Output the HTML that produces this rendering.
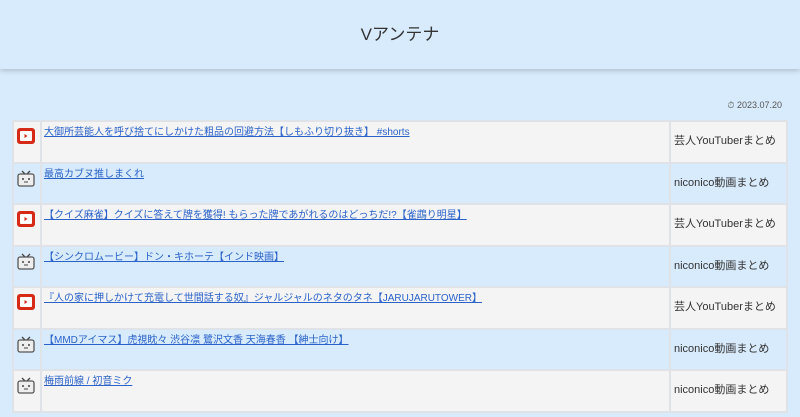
<!DOCTYPE html>
<html><head><meta charset="utf-8">
<style>
body{margin:0;width:800px;height:417px;overflow:hidden;background:#d8ebfc;font-family:"Liberation Sans","Noto Sans CJK JP",sans-serif;}
.hd{height:69px;background:#d7ebfc;box-shadow:0 2px 5px rgba(0,0,0,.18);text-align:center;line-height:70px;font-size:17px;color:#333;position:relative;}
.date{position:absolute;top:100px;right:18px;font-size:9px;color:#555;}
table{position:absolute;top:120px;left:12px;width:776px;border-collapse:separate;border-spacing:2px;background:#dfe3e8;table-layout:fixed;}
td{box-sizing:border-box;height:39.5px;vertical-align:top;padding:4px 0 0 2px;font-size:10px;line-height:13px;overflow:hidden;}
tr.a td{background:#f4f4f4}
tr.b td{background:#d8ebfc}
td.i{width:26px;padding:6px 0 0 2px;}
td.s{width:115px;vertical-align:middle;padding:0 0 0 3px;font-size:11px;color:#333;}
a{color:#2a62c9;text-decoration:underline;white-space:nowrap;}
</style></head><body>
<div class="hd">Vアンテナ</div>
<div class="date">⏱ 2023.07.20</div>
<table>
<tr class="a"><td class="i"><svg width="20" height="16"><rect x="1" y="0" width="18" height="16" rx="3" fill="#d62a17"/><rect x="4" y="3" width="12" height="10" rx="1" fill="#fff"/><path d="M8.5 6v4l3-2z" fill="#d62a17"/></svg></td><td><a>大御所芸能人を呼び捨てにしかけた粗品の回避方法【しもふり切り抜き】 #shorts</a></td><td class="s">芸人YouTuberまとめ</td></tr>
<tr class="b"><td class="i"><svg width="20" height="18"><path d="M6 1l3 3M14 1l-3 3" stroke="#444" stroke-width="1.3"/><rect x="2" y="4" width="16" height="12" rx="2" fill="#eee" stroke="#555" stroke-width="1.3"/><circle cx="7" cy="9" r="1" fill="#444"/><circle cx="13" cy="9" r="1" fill="#444"/><path d="M8 12h4" stroke="#444"/></svg></td><td><a>最高カブヌ推しまくれ</a></td><td class="s">niconico動画まとめ</td></tr>
<tr class="a"><td class="i"><svg width="20" height="16"><rect x="1" y="0" width="18" height="16" rx="3" fill="#d62a17"/><rect x="4" y="3" width="12" height="10" rx="1" fill="#fff"/><path d="M8.5 6v4l3-2z" fill="#d62a17"/></svg></td><td><a>【クイズ麻雀】クイズに答えて牌を獲得! もらった牌であがれるのはどっちだ!?【雀鵡り明星】</a></td><td class="s">芸人YouTuberまとめ</td></tr>
<tr class="b"><td class="i"><svg width="20" height="18"><path d="M6 1l3 3M14 1l-3 3" stroke="#444" stroke-width="1.3"/><rect x="2" y="4" width="16" height="12" rx="2" fill="#eee" stroke="#555" stroke-width="1.3"/><circle cx="7" cy="9" r="1" fill="#444"/><circle cx="13" cy="9" r="1" fill="#444"/><path d="M8 12h4" stroke="#444"/></svg></td><td><a>【シンクロムービー】ドン・キホーテ【インド映画】</a></td><td class="s">niconico動画まとめ</td></tr>
<tr class="a"><td class="i"><svg width="20" height="16"><rect x="1" y="0" width="18" height="16" rx="3" fill="#d62a17"/><rect x="4" y="3" width="12" height="10" rx="1" fill="#fff"/><path d="M8.5 6v4l3-2z" fill="#d62a17"/></svg></td><td><a>『人の家に押しかけて充電して世間話する奴』ジャルジャルのネタのタネ【JARUJARUTOWER】</a></td><td class="s">芸人YouTuberまとめ</td></tr>
<tr class="b"><td class="i"><svg width="20" height="18"><path d="M6 1l3 3M14 1l-3 3" stroke="#444" stroke-width="1.3"/><rect x="2" y="4" width="16" height="12" rx="2" fill="#eee" stroke="#555" stroke-width="1.3"/><circle cx="7" cy="9" r="1" fill="#444"/><circle cx="13" cy="9" r="1" fill="#444"/><path d="M8 12h4" stroke="#444"/></svg></td><td><a>【MMDアイマス】虎視眈々 渋谷凛 鷺沢文香 天海春香 【紳士向け】</a></td><td class="s">niconico動画まとめ</td></tr>
<tr class="a"><td class="i"><svg width="20" height="18"><path d="M6 1l3 3M14 1l-3 3" stroke="#444" stroke-width="1.3"/><rect x="2" y="4" width="16" height="12" rx="2" fill="#eee" stroke="#555" stroke-width="1.3"/><circle cx="7" cy="9" r="1" fill="#444"/><circle cx="13" cy="9" r="1" fill="#444"/><path d="M8 12h4" stroke="#444"/></svg></td><td><a>梅雨前線 / 初音ミク</a></td><td class="s">niconico動画まとめ</td></tr>
</table>
</body></html>
